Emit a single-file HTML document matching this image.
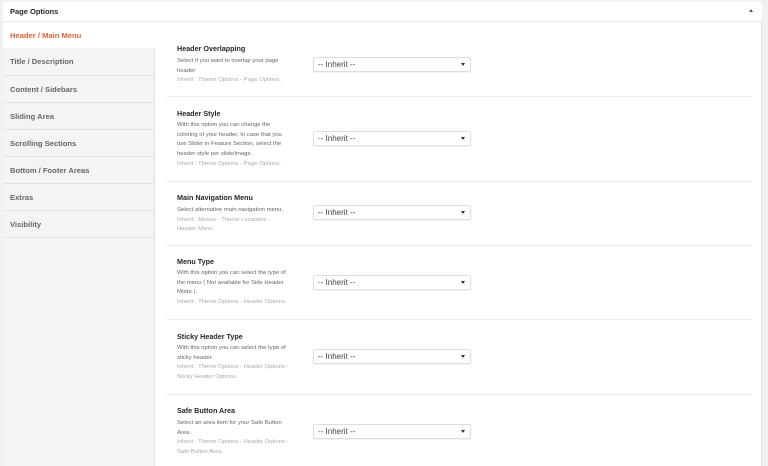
<!DOCTYPE html>
<html><head><meta charset="utf-8"><style>
*{margin:0;padding:0;box-sizing:border-box}
html,body{width:768px;height:466px;overflow:hidden}
body{background:#f1f1f1;font-family:"Liberation Sans",Arial,sans-serif;position:relative}
.panel{position:absolute;left:3px;top:2px;width:759px;height:464px;background:#fff;border:1px solid #e5e5e5;border-bottom:none}
.hdr{position:absolute;left:3px;top:2px;width:759px;height:20px;border-bottom:1px solid #e5e5e5;background:#fff}
.hdr span{position:absolute;left:7px;top:5px;font-size:7.5px;font-weight:bold;color:#23282d}
.arrow{position:absolute;left:749px;top:9px;width:0;height:0;border-left:2.5px solid transparent;border-right:2.5px solid transparent;border-bottom:3px solid #555}
.side{position:absolute;left:3px;top:48px;width:152px;height:418px;background:#f4f4f2;border-right:1px solid #e2e2e2}
.item{position:absolute;left:3px;width:152px;height:27px;border-bottom:1px solid #e2e2e2;font-size:7.6px;font-weight:bold;color:#666;padding:9px 0 0 7px;background:#f4f4f2;border-right:1px solid #e2e2e2}
.active{background:#fff;color:#e0623b;border:none}
.t{position:absolute;left:177px;font-size:7.2px;font-weight:bold;color:#23282d}
.d{position:absolute;left:177px;font-size:5.9px;color:#666;line-height:9.7px;width:130px}
.d .g{color:#aaa}
.sel{position:absolute;left:313px;width:158px;height:15px;border:1px solid #ddd;border-radius:2px;box-shadow:0 1px 1px rgba(0,0,0,.05);font-size:8px;color:#444;padding:2px 0 0 4px;background:#fff}
.sel:after{content:"";position:absolute;right:5px;top:5px;border-left:2px solid transparent;border-right:2px solid transparent;border-top:3px solid #333}
.sep{position:absolute;left:166px;width:586px;height:1px;background:#eee}
</style></head><body>
<div class="panel"></div>
<div class="hdr"><span>Page Options</span></div>
<div class="arrow"></div>
<div class="side"></div>
<div class="item active" style="top:22px;height:26px">Header / Main Menu</div>
<div class="item" style="top:48px;height:28px">Title / Description</div>
<div class="item" style="top:76px">Content / Sidebars</div>
<div class="item" style="top:103px">Sliding Area</div>
<div class="item" style="top:130px">Scrolling Sections</div>
<div class="item" style="top:157px">Bottom / Footer Areas</div>
<div class="item" style="top:184px">Extras</div>
<div class="item" style="top:211px">Visibility</div>

<div class="t" style="top:44px">Header Overlapping</div>
<div class="d" style="top:57px">Select if you want to overlap your page<br>header<br><span class="g">Inherit : Theme Options - Page Options.</span></div>
<div class="sel" style="top:57px">-- Inherit --</div>
<div class="sep" style="top:96px"></div>

<div class="t" style="top:109px">Header Style</div>
<div class="d" style="top:121px">With this option you can change the<br>coloring of your header. In case that you<br>use Slider in Feature Section, select the<br>header style per slide/image.<br><span class="g">Inherit : Theme Options - Page Options.</span></div>
<div class="sel" style="top:131px">-- Inherit --</div>
<div class="sep" style="top:181px"></div>

<div class="t" style="top:193px">Main Navigation Menu</div>
<div class="d" style="top:206px">Select alternative main navigation menu.<br><span class="g">Inherit : Menus - Theme Locations -<br>Header Menu.</span></div>
<div class="sel" style="top:205px">-- Inherit --</div>
<div class="sep" style="top:245px"></div>

<div class="t" style="top:257px">Menu Type</div>
<div class="d" style="top:269px">With this option you can select the type of<br>the menu ( Not available for Side Header<br>Mode ).<br><span class="g">Inherit : Theme Options - Header Options.</span></div>
<div class="sel" style="top:275px">-- Inherit --</div>
<div class="sep" style="top:319px"></div>

<div class="t" style="top:332px">Sticky Header Type</div>
<div class="d" style="top:344px">With this option you can select the type of<br>sticky header.<br><span class="g">Inherit : Theme Options - Header Options -<br>Sticky Header Options.</span></div>
<div class="sel" style="top:349px">-- Inherit --</div>
<div class="sep" style="top:394px"></div>

<div class="t" style="top:406px">Safe Button Area</div>
<div class="d" style="top:419px">Select an area item for your Safe Button<br>Area.<br><span class="g">Inherit : Theme Options - Header Options -<br>Safe Button Area.</span></div>
<div class="sel" style="top:424px">-- Inherit --</div>
</body></html>
